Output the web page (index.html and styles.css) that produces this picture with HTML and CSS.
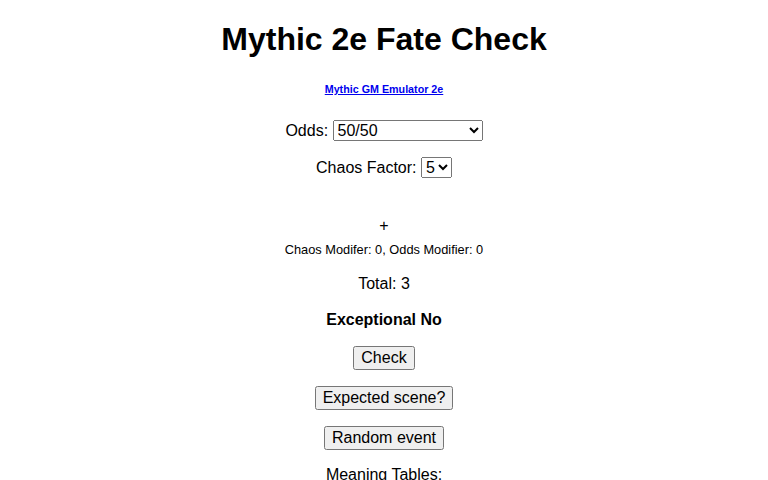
FILE: index.html
```html
<!DOCTYPE html>
<html>
<head>
<meta charset="utf-8">
<title>Mythic 2e Fate Check</title>
<link rel="stylesheet" href="styles.css">
</head>
<body>
<h1>Mythic 2e Fate Check</h1>
<h6><a href="#">Mythic GM Emulator 2e</a></h6>
<p>Odds: <select class="odds"><option>50/50</option></select></p>
<p>Chaos Factor: <select><option>5</option></select></p>
<div class="dice">+</div>
<div class="mods">Chaos Modifer: 0, Odds Modifier: 0</div>
<p class="total">Total: 3</p>
<p class="result">Exceptional No</p>
<p><button>Check</button></p>
<p><button>Expected scene?</button></p>
<p><button>Random event</button></p>
<p>Meaning Tables:</p>
</body>
</html>
```
FILE: styles.css
```css
body {
  margin: 0 8px 8px;
  font-family: "Liberation Sans", Arial, sans-serif;
  text-align: center;
  color: #000;
  background: #fff;
}
h1 { font-size: 32px; margin: 21px 0; }
h6 { font-size: 10.72px; margin: 25px 0; }
a { color: #00e; }
select, button {
  font-family: "Liberation Sans", Arial, sans-serif;
  font-size: 16px;
}
.odds { width: 150px; }
.dice { padding-top: 23px; line-height: 18px; }
.mods { font-size: 12.8px; margin-top: 7px; }
.total { margin-top: 18px; }
.result { font-weight: bold; margin-top: 18px; margin-bottom: 17px; }
```
